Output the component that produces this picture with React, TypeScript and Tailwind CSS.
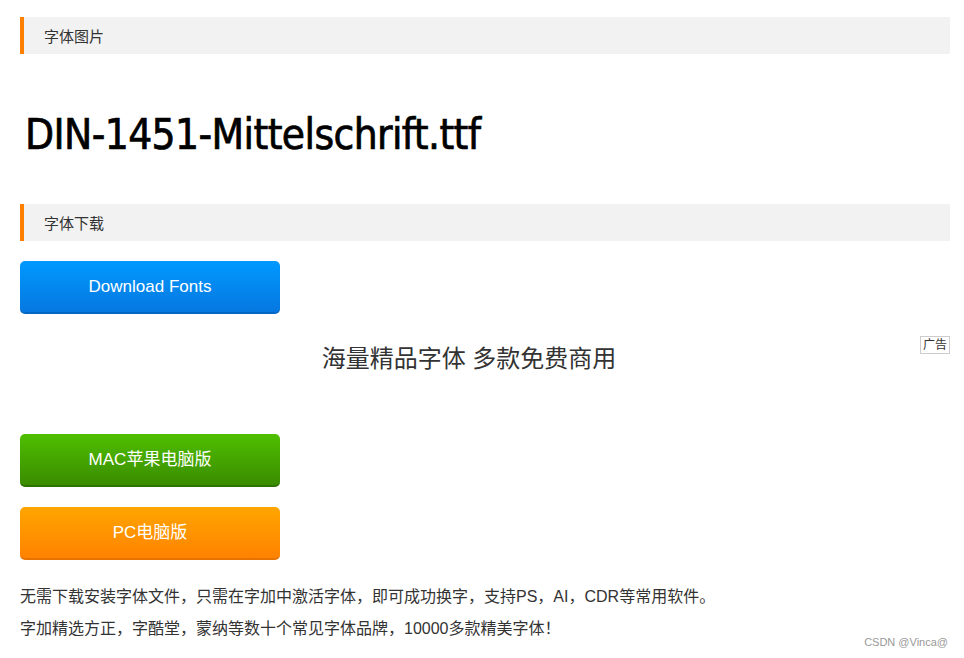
import React from "react";

const cjk = "font-['Liberation_Sans','Noto_Sans_CJK_SC',sans-serif]";

function SectionHead({ title }: { title: string }) {
  return (
    <div className="h-[37px] bg-[#f2f2f2] border-l-4 border-[#ff7f00] flex items-center pl-[20px] pt-[3px]">
      <span className={`${cjk} text-[15px] text-[#333]`}>{title}</span>
    </div>
  );
}

function Btn({ label, tone }: { label: string; tone: "blue" | "green" | "orange" }) {
  const tones = {
    blue: "bg-gradient-to-b from-[#0099ff] to-[#0678e0] border-[#0567c4]",
    green: "bg-gradient-to-b from-[#4fbf00] to-[#3a8c00] border-[#2e7200]",
    orange: "bg-gradient-to-b from-[#ffa500] to-[#ff8200] border-[#e67300]",
  };
  return (
    <a
      href="#"
      className={`${tones[tone]} ${cjk} w-[260px] h-[53px] rounded-[5px] border-b-2 flex items-center justify-center text-white text-[17px]`}
    >
      {label}
    </a>
  );
}

export default function App() {
  return (
    <div className="relative w-[964px] h-[658px] bg-white overflow-hidden">
      <div className="ml-5 w-[930px] pt-[17px]">
        <SectionHead title="字体图片" />

        <div className="h-[150px] flex items-center pl-[5px] pt-[12px]">
          <h1 className="font-['DejaVu_Sans_Condensed',sans-serif] text-[42px] tracking-[-0.6px] [-webkit-text-stroke:0.7px_black] text-black leading-none">
            DIN-1451-Mittelschrift.ttf
          </h1>
        </div>

        <SectionHead title="字体下载" />

        <div className="mt-5">
          <Btn label="Download Fonts" tone="blue" />
        </div>

        <div className="relative h-[120px] pr-[32px] flex items-center justify-center pb-[30px]">
          <span className={`${cjk} text-[24px] text-[#333]`}>海量精品字体 多款免费商用</span>
          <span className={`${cjk} absolute right-0 top-[22px] border border-[#ccc] px-[2px] text-[12px] leading-[16px] text-[#333] bg-white`}>
            广告
          </span>
        </div>

        <div className="flex flex-col gap-5">
          <Btn label="MAC苹果电脑版" tone="green" />
          <Btn label="PC电脑版" tone="orange" />
        </div>

        <div className={`${cjk} mt-[21px] text-[16px] leading-[32px] text-[#333]`}>
          <p>无需下载安装字体文件，只需在字加中激活字体，即可成功换字，支持PS，AI，CDR等常用软件。</p>
          <p>字加精选方正，字酷堂，蒙纳等数十个常见字体品牌，10000多款精美字体！</p>
        </div>
      </div>

      <span className="absolute right-[16px] bottom-[8px] font-['Liberation_Sans',sans-serif] text-[11px] text-[#999]">
        CSDN @Vinca@
      </span>
    </div>
  );
}
